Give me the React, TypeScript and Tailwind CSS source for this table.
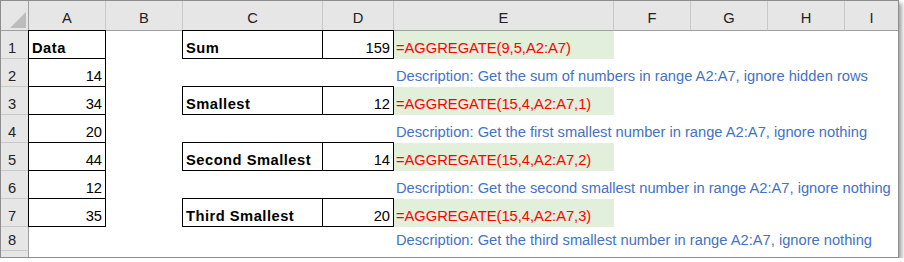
import clsx from "clsx";

type SheetRow = {
  n: number;
  a?: string;
  c?: string;
  d?: string;
  formula?: string;
  note?: string;
};

const cols = ["A", "B", "C", "D", "E", "F", "G", "H", "I"];

const rows: SheetRow[] = [
  { n: 1, a: "Data", c: "Sum", d: "159", formula: "=AGGREGATE(9,5,A2:A7)" },
  { n: 2, a: "14", note: "Description: Get the sum of numbers in range A2:A7, ignore hidden rows" },
  { n: 3, a: "34", c: "Smallest", d: "12", formula: "=AGGREGATE(15,4,A2:A7,1)" },
  { n: 4, a: "20", note: "Description: Get the first smallest number in range A2:A7, ignore nothing" },
  { n: 5, a: "44", c: "Second Smallest", d: "14", formula: "=AGGREGATE(15,4,A2:A7,2)" },
  { n: 6, a: "12", note: "Description: Get the second smallest number in range A2:A7, ignore nothing" },
  { n: 7, a: "35", c: "Third Smallest", d: "20", formula: "=AGGREGATE(15,4,A2:A7,3)" },
  { n: 8, note: "Description: Get the third smallest number in range A2:A7, ignore nothing" },
];

function Row({ row }: { row: SheetRow }) {
  const isHeader = row.n === 1;
  return (
    <>
      <div className="flex items-end justify-center pr-[5px] pb-[2px] bg-[#e6e6e6] border-r border-r-[#9f9f9f] border-b border-b-[#c8c8c8] text-[#222]">
        {row.n}
      </div>

      {row.a ? (
        <div
          className={clsx(
            "flex items-end px-[3px] pb-[2px] mr-px mb-px ring-1 ring-black",
            isHeader ? "font-bold tracking-[0.5px]" : "justify-end"
          )}
        >
          {row.a}
        </div>
      ) : (
        <div />
      )}

      <div />

      {row.c ? (
        <div className="col-span-2 flex mr-px mb-px ring-1 ring-black">
          <div className="w-[140px] flex items-end pl-[3px] pb-[2px] border-r border-black font-bold tracking-[0.5px] whitespace-nowrap">
            {row.c}
          </div>
          <div className="flex-1 flex items-end justify-end pr-[3px] pb-[2px]">{row.d}</div>
        </div>
      ) : (
        <div className="col-span-2" />
      )}

      {row.formula ? (
        <>
          <div className="flex items-end pl-[2px] pb-[3px] bg-[#e2efda] text-[#ff0000] whitespace-nowrap">
            {row.formula}
          </div>
          <div className="col-span-4" />
        </>
      ) : (
        <div className="col-span-5 flex items-end pl-[2px] pb-[3px] text-[#4472c4] whitespace-nowrap">
          {row.note}
        </div>
      )}
    </>
  );
}

export default function App() {
  return (
    <div className="bg-white">
      <div className="grid w-[899px] h-[258px] grid-cols-[28px_77px_77px_140px_71px_220px_77px_77px_77px_1fr] grid-rows-[30px_repeat(7,28px)_24px_6px] border border-[#8d8d8d] bg-white font-['Liberation_Sans',Arial,sans-serif] text-[14.7px] leading-none text-black shadow-[3px_3px_4px_rgba(0,0,0,0.35)]">
        {/* corner with select-all triangle */}
        <div className="flex items-end justify-end pr-[2px] pb-[2px] bg-[#e6e6e6] border-r border-b border-[#9f9f9f]">
          <svg width="16" height="16" viewBox="0 0 16 16">
            <polygon points="16,0 16,16 0,16" fill="#bcbcbc" />
          </svg>
        </div>
        {cols.map((c, i) => (
          <div
            key={c}
            className={clsx(
              "flex items-end justify-center pb-[4px] bg-[#e6e6e6] border-b border-b-[#9f9f9f] text-[#222]",
              i < cols.length - 1 && "border-r border-r-[#c8c8c8]"
            )}
          >
            {c}
          </div>
        ))}

        {rows.map((row) => (
          <Row key={row.n} row={row} />
        ))}

        <div className="bg-[#e6e6e6] border-r border-r-[#9f9f9f]" />
        <div className="col-span-9" />
      </div>
    </div>
  );
}
